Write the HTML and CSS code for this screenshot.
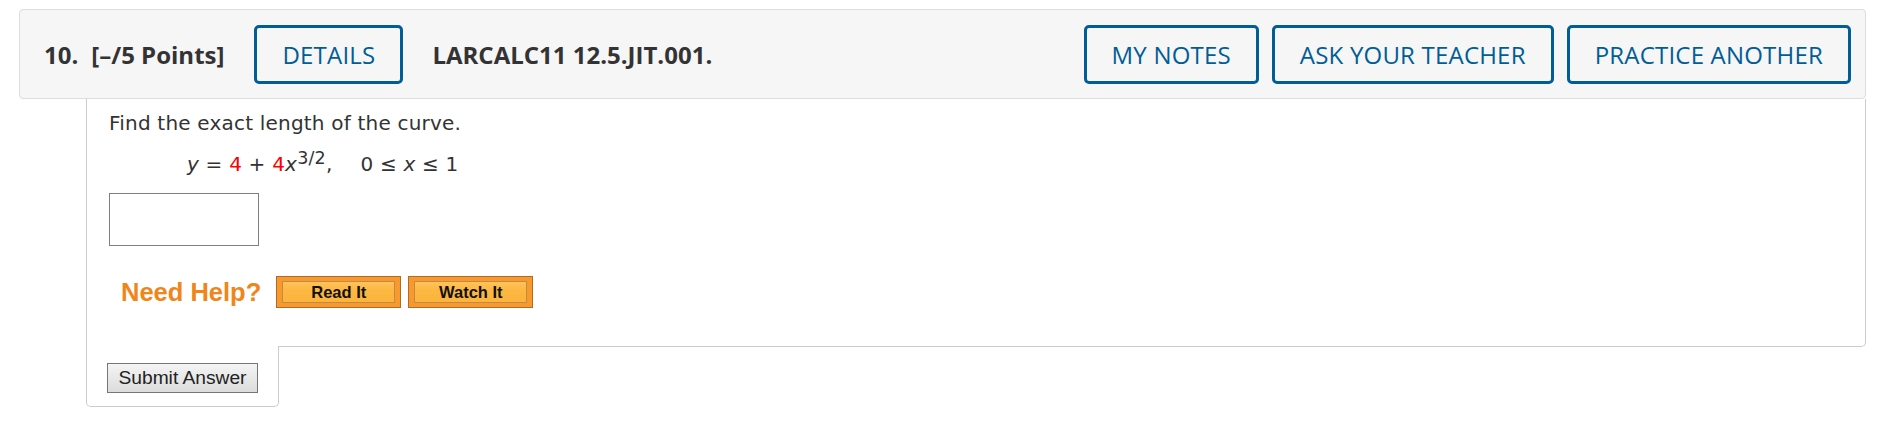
FILE: index.html
```html
<!DOCTYPE html>
<html>
<head>
<meta charset="utf-8">
<link rel="stylesheet" href="styles.css">
</head>
<body>
<div class="question">
  <div class="q-header">
    <div class="q-left">
      <span class="q-num">10.</span>
      <span class="q-pts">[–/5 Points]</span>
      <button class="hbtn hbtn-details">DETAILS</button>
      <span class="q-code">LARCALC11 12.5.JIT.001.</span>
    </div>
    <div class="q-right">
      <button class="hbtn">MY NOTES</button>
      <button class="hbtn">ASK YOUR TEACHER</button>
      <button class="hbtn">PRACTICE ANOTHER</button>
    </div>
  </div>
  <div class="q-body">
    <p class="prompt">Find the exact length of the curve.</p>
    <div class="eq"><i>y</i> = <span class="red">4</span> + <span class="red">4</span><i>x</i><sup>3/2</sup>,<span class="range">0 ≤ <i>x</i> ≤ 1</span></div>
    <input class="answer" type="text">
    <div class="help">
      <span class="need">Need Help?</span>
      <button class="help-btn"><span class="help-inner">Read It</span></button>
      <button class="help-btn"><span class="help-inner">Watch It</span></button>
    </div>
  </div>
  <div class="submit-tab">
    <button class="submit">Submit Answer</button>
  </div>
</div>
</body>
</html>
```

FILE: styles.css
```css
body {
  margin: 0;
  background: #ffffff;
}

.question {
  margin: 9px 20px 0 19px;
}

.q-header {
  display: flex;
  justify-content: space-between;
  align-items: center;
  height: 88px;
  border: 1px solid #dddddd;
  border-radius: 4px;
  background: #f6f6f6;
  padding: 0 14px 0 24px;
  font-family: "Open Sans", sans-serif;
  font-size: 24px;
  color: #333333;
}

.q-left {
  display: flex;
  align-items: center;
}

.q-num,
.q-pts,
.q-code {
  font-weight: 700;
}

.q-pts {
  margin-left: 13px;
}

.q-code {
  margin-left: 29px;
}

.q-right {
  display: flex;
  align-items: center;
  gap: 13px;
}

.hbtn {
  font-family: "Open Sans", sans-serif;
  font-size: 24px;
  font-weight: 400;
  letter-spacing: 0.2px;
  color: #005d96;
  background: transparent;
  border: 3px solid #005d96;
  border-radius: 5px;
  height: 59px;
  padding: 0 25px;
  margin: 0;
  cursor: pointer;
}

.hbtn-details {
  margin-left: 30px;
}

.q-body {
  margin-left: 67px;
  border-left: 1px solid #cccccc;
  border-right: 1px solid #cccccc;
  border-bottom: 1px solid #cccccc;
  border-bottom-right-radius: 5px;
  padding: 13px 22px 38px 22px;
  font-family: "DejaVu Sans", Verdana, sans-serif;
  font-size: 20px;
  letter-spacing: 0.2px;
  color: #333333;
}

.prompt {
  margin: 0;
  line-height: 23px;
}

.eq {
  margin: 18px 0 0 78px;
  line-height: 23px;
}

.eq sup {
  font-size: 17.5px;
  line-height: 0;
  vertical-align: 7px;
}

.red {
  color: #ff0000;
}

.range {
  margin-left: 28px;
}

.answer {
  display: block;
  box-sizing: border-box;
  width: 150px;
  height: 53px;
  margin: 17px 0 0 0;
  border: 1px solid #7f7f7f;
  background: #ffffff;
  padding: 0;
}

.help {
  display: flex;
  align-items: center;
  margin-top: 30px;
  height: 32px;
  letter-spacing: 0;
}

.need {
  font-family: "Liberation Sans", Arial, sans-serif;
  font-weight: 700;
  font-size: 25.5px;
  color: #f0861a;
  margin-left: 12px;
  margin-right: 15px;
}

.help-btn {
  box-sizing: border-box;
  width: 125px;
  height: 32px;
  padding: 4px 5px;
  margin: 0 7px 0 0;
  border: 1px solid #b06b28;
  background: #f7992c;
  cursor: pointer;
}

.help-inner {
  display: flex;
  align-items: center;
  justify-content: center;
  box-sizing: border-box;
  height: 22px;
  border: 1px solid #c48a45;
  background: linear-gradient(#fdc35a, #fdb842 40%, #fbb43e);
  font-family: "Liberation Sans", Arial, sans-serif;
  font-weight: 700;
  font-size: 16.5px;
  color: #111111;
}

.submit-tab {
  margin: -1px 0 0 67px;
  border: 1px solid #cccccc;
  border-top: none;
  border-bottom-left-radius: 5px;
  border-bottom-right-radius: 5px;
  background: #ffffff;
  padding: 17px 0 13px 20px;
  box-sizing: content-box;
  width: 171px;
}

.submit {
  display: block;
  box-sizing: border-box;
  width: 151px;
  height: 30px;
  margin: 0;
  padding: 0;
  border: 1px solid #767676;
  background: linear-gradient(#f4f4f4, #dcdcdc);
  font-family: "Liberation Sans", Arial, sans-serif;
  font-size: 19.2px;
  color: #222222;
}
```
